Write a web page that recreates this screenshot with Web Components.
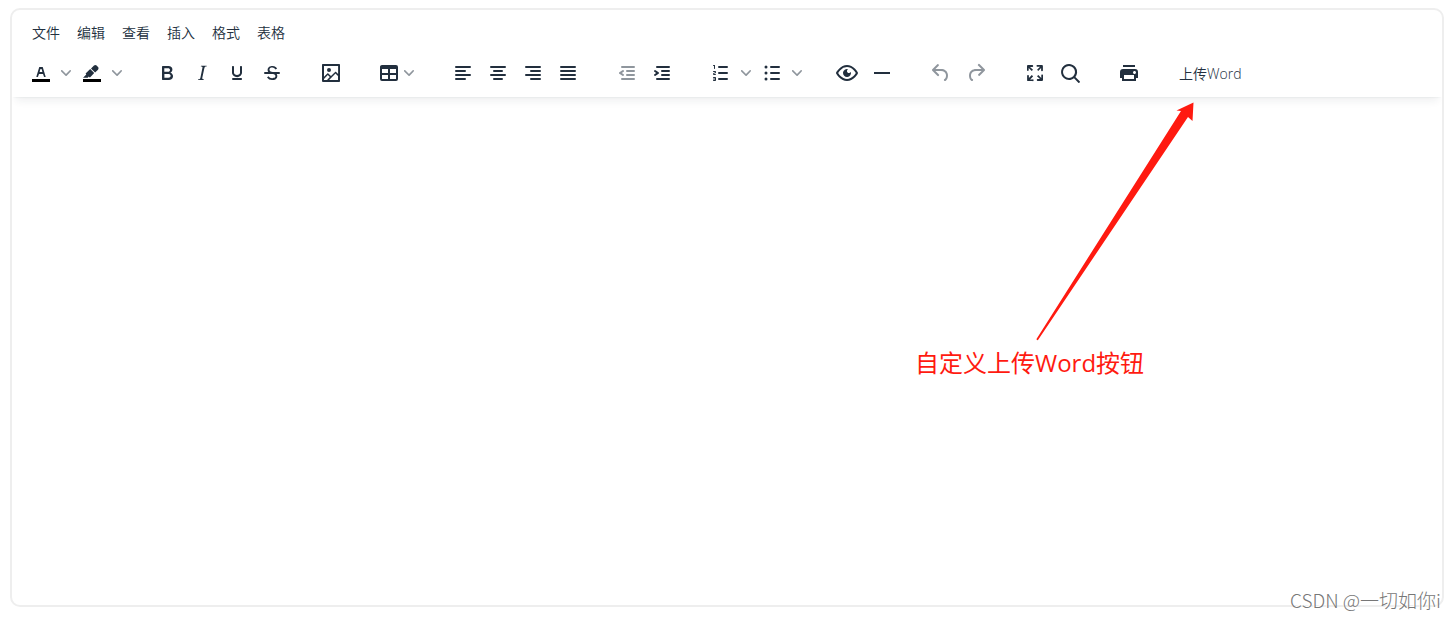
<!DOCTYPE html>
<html lang="zh-CN">
<head>
<meta charset="utf-8">
<meta name="viewport" content="width=device-width, initial-scale=1">
<title>富文本编辑器</title>
<style>
  body {
    box-sizing: border-box;
    display: flex;
    font-family: "Open Sans", "Noto Sans CJK SC", sans-serif;
    margin: 0;
    min-height: 100vh;
    padding: 8px 11px 13px 10px;
    position: relative;
  }
</style>
</head>
<body>
<rich-editor>
  <editor-menubar slot="menubar" items="文件,编辑,查看,插入,格式,表格"></editor-menubar>
  <editor-toolbar slot="toolbar">
    <tool-group>
      <split-button icon="text-color" label="文字颜色"></split-button>
      <split-button icon="highlight" label="背景颜色"></split-button>
    </tool-group>
    <tool-group>
      <tool-button icon="bold" label="粗体"></tool-button>
      <tool-button icon="italic" label="斜体"></tool-button>
      <tool-button icon="underline" label="下划线"></tool-button>
      <tool-button icon="strike" label="删除线"></tool-button>
    </tool-group>
    <tool-group>
      <tool-button icon="image" label="图片"></tool-button>
    </tool-group>
    <tool-group>
      <tool-button icon="table" label="表格" menu></tool-button>
    </tool-group>
    <tool-group>
      <tool-button icon="align-left" label="左对齐"></tool-button>
      <tool-button icon="align-center" label="居中"></tool-button>
      <tool-button icon="align-right" label="右对齐"></tool-button>
      <tool-button icon="align-justify" label="两端对齐"></tool-button>
    </tool-group>
    <tool-group>
      <tool-button icon="outdent" label="减少缩进" disabled></tool-button>
      <tool-button icon="indent" label="增加缩进"></tool-button>
    </tool-group>
    <tool-group>
      <split-button icon="ordered-list" label="有序列表"></split-button>
      <split-button icon="bullet-list" label="无序列表"></split-button>
    </tool-group>
    <tool-group>
      <tool-button icon="preview" label="预览"></tool-button>
      <tool-button icon="rule" label="水平线"></tool-button>
    </tool-group>
    <tool-group>
      <tool-button icon="undo" label="撤销" disabled></tool-button>
      <tool-button icon="redo" label="重做" disabled></tool-button>
    </tool-group>
    <tool-group>
      <tool-button icon="fullscreen" label="全屏"></tool-button>
      <tool-button icon="search" label="查找"></tool-button>
    </tool-group>
    <tool-group>
      <tool-button icon="print" label="打印"></tool-button>
    </tool-group>
    <tool-group>
      <tool-button>上传Word</tool-button>
    </tool-group>
  </editor-toolbar>
</rich-editor>
<arrow-note>自定义上传Word按钮</arrow-note>
<corner-mark>CSDN @一切如你i</corner-mark>

<script>
const bar = (x, y, w) =>
    `M${x + 1} ${y}h${w - 2}a1 1 0 0 1 0 2h-${w - 2}a1 1 0 0 1 0-2z`;

// All icons are drawn on a 24 x 24 grid.
const ICONS = {
    'text-color': '<path fill="#000" d="M3 18h18v3H3z"/><path d="M8.7 16h-.8a.5.5 0 0 1-.5-.6l2.7-9c.1-.3.3-.4.5-.4h2.8c.2 0 .4.1.5.4l2.7 9a.5.5 0 0 1-.5.6h-.8a.5.5 0 0 1-.4-.4l-.7-2.2c0-.3-.3-.4-.5-.4h-3.4c-.2 0-.4.1-.5.4l-.7 2.2c0 .3-.2.4-.4.4zm2.6-7.6-.6 2a.5.5 0 0 0 .5.6h1.6a.5.5 0 0 0 .5-.6l-.6-2c0-.3-.3-.4-.5-.4h-.4c-.2 0-.4.1-.5.4z"/>',
    'highlight': '<path fill="#000" d="M3 18h18v3H3z"/><path d="M7.7 16.7H3l3.3-3.3-.7-.8L10.2 8l4 4.1-4 4.2c-.2.2-.6.2-.8 0l-.6-.7-1.1 1.1zm5-7.5L11 7.4l3-2.9a2 2 0 0 1 2.6 0L18 6c.7.7.7 2 0 2.7l-2.9 2.9-1.8-1.8-.5-.6z"/>',
    'bold': '<path d="M7.8 19c-.3 0-.5 0-.6-.2l-.2-.5V5.7c0-.2 0-.4.2-.5l.6-.2h5c1.5 0 2.7.3 3.5 1 .7.6 1.1 1.4 1.1 2.5a3 3 0 0 1-.6 1.9c-.4.6-1 1-1.6 1.2.4.1.9.3 1.3.6s.8.7 1 1.2c.4.4.5 1 .5 1.6 0 1.3-.4 2.3-1.3 3-.8.7-2.1 1-3.8 1H7.8zm5-8.3c.6 0 1.2-.1 1.6-.5.4-.3.6-.7.6-1.3 0-1.1-.8-1.7-2.3-1.7H9.3v3.5h3.4zm.5 6c.7 0 1.3-.1 1.7-.4.4-.4.6-.9.6-1.5s-.2-1-.7-1.4c-.4-.3-1-.4-2-.4H9.4v3.8h4z"/>',
    'italic': '<path d="m16.7 4.7-.1.9h-.3c-.6 0-1 0-1.4.3-.3.3-.4.6-.5 1.1l-2.1 9.8v.6c0 .5.4.8 1.4.8h.2l-.2.8H8l.2-.8h.2c1.1 0 1.8-.5 2-1.5l2-9.8.1-.5c0-.6-.4-.8-1.4-.8h-.3l.2-.9h5.8z"/>',
    'underline': '<path d="M16 5c.6 0 1 .4 1 1v5.5a4 4 0 0 1-.4 1.8l-1 1.4a5.3 5.3 0 0 1-5.5 1 5 5 0 0 1-1.6-1c-.5-.4-.8-.9-1.1-1.4a4 4 0 0 1-.4-1.8V6c0-.6.4-1 1-1s1 .4 1 1v5.5c0 .3 0 .6.2 1l.6.7a3.3 3.3 0 0 0 2.2.8 3.4 3.4 0 0 0 2.2-.8c.3-.2.4-.5.6-.8l.2-.9V6c0-.6.4-1 1-1zM8 17h8c.6 0 1 .4 1 1s-.4 1-1 1H8a1 1 0 0 1 0-2z"/>',
    'strike': `<path d="M15.6 8.5c-.5-.7-1-1.1-1.3-1.3-.6-.4-1.3-.6-2-.6-2.7 0-2.8 1.7-2.8 2.1 0 1.6 1.8 2 3.2 2.3 4.4.9 4.6 2.8 4.6 3.9 0 1.4-.7 4.1-5 4.1A6.2 6.2 0 0 1 7 16.4l1.5-1.1c.4.6 1.6 2 3.7 2 1.6 0 2.5-.4 3-1.2.4-.8.3-2-.8-2.6-.7-.4-1.6-.7-2.9-1-1-.2-3.9-.8-3.9-3.6C7.6 6 10.3 5 12.4 5c2.9 0 4.2 1.6 4.7 2.4l-1.5 1.1z"/><path d="${bar(4, 11, 16)}"/>`,
    'image': '<path fill-rule="evenodd" d="m5 15.7 3.3-3.2c.3-.3.7-.3 1 0L12 15l4.1-4c.3-.4.8-.4 1 0l2 1.9V5H5v10.7zM5 18v1h3l2.8-2.9-2-2L5 17.9zm14-3-2.5-2.4-6.4 6.5H19v-4zM4 3h16c.6 0 1 .4 1 1v16c0 .6-.4 1-1 1H4a1 1 0 0 1-1-1V4c0-.6.4-1 1-1zm6 8a2 2 0 1 0 0-4 2 2 0 0 0 0 4z"/>',
    'table': '<path fill-rule="evenodd" d="M19 4a2 2 0 0 1 2 2v12a2 2 0 0 1-2 2H5a2 2 0 0 1-2-2V6c0-1.1.9-2 2-2h14zM5 14v4h6v-4H5zm14 0h-6v4h6v-4zm0-6h-6v4h6V8zM5 12h6V8H5v4z"/>',
    'align-left': `<path d="${bar(4, 5, 16)}${bar(4, 9, 11)}${bar(4, 13, 16)}${bar(4, 17, 11)}"/>`,
    'align-center': `<path d="${bar(4, 5, 16)}${bar(7, 9, 10)}${bar(4, 13, 16)}${bar(7, 17, 10)}"/>`,
    'align-right': `<path d="${bar(4, 5, 16)}${bar(9, 9, 11)}${bar(4, 13, 16)}${bar(9, 17, 11)}"/>`,
    'align-justify': `<path d="${bar(4, 5, 16)}${bar(4, 9, 16)}${bar(4, 13, 16)}${bar(4, 17, 16)}"/>`,
    'outdent': `<path d="${bar(6, 5, 14)}${bar(11, 9, 9)}${bar(11, 13, 9)}${bar(6, 17, 14)}M8.6 13.2a1 1 0 0 1-1.2 1.6l-3-2a1 1 0 0 1 0-1.6l3-2a1 1 0 0 1 1.2 1.6L6.8 12z"/>`,
    'indent': `<path d="${bar(6, 5, 14)}${bar(11, 9, 9)}${bar(11, 13, 9)}${bar(6, 17, 14)}M4.4 13.2 6.2 12l-1.8-1.2a1 1 0 0 1 1.2-1.6l3 2a1 1 0 0 1 0 1.6l-3 2a1 1 0 1 1-1.2-1.6z"/>`,
    'ordered-list': `<path d="${bar(9, 5, 10)}${bar(9, 11, 10)}${bar(9, 17, 10)}M6 4v3.5c0 .3-.2.5-.5.5a.5.5 0 0 1-.5-.5V5h-.5a.5.5 0 0 1 0-1H6zm-1 8.8.2.2h1.3c.3 0 .5.2.5.5s-.2.5-.5.5H4.9a1 1 0 0 1-.9-1V13c0-.4.3-.8.6-1l1.2-.4.2-.3a.2.2 0 0 0-.2-.2H4.5a.5.5 0 0 1-.5-.5c0-.3.2-.5.5-.5h1.6c.5 0 .9.4.9 1v.1c0 .4-.3.8-.6 1l-1.2.4-.2.3zM7 17v2c0 .6-.4 1-1 1H4.5a.5.5 0 0 1 0-1h1.2c.2 0 .3-.1.3-.3 0-.2-.1-.3-.3-.3H4.4a.4.4 0 1 1 0-.8h1.3c.2 0 .3-.1.3-.3 0-.2-.1-.3-.3-.3H4.5a.5.5 0 1 1 0-1H6c.6 0 1 .4 1 1z"/>`,
    'bullet-list': `<path d="${bar(10, 5, 10)}${bar(10, 11, 10)}${bar(10, 17, 10)}"/><circle cx="6" cy="6" r="1.5"/><circle cx="6" cy="12" r="1.5"/><circle cx="6" cy="18" r="1.5"/>`,
    'preview': '<path fill-rule="evenodd" d="M3.5 12.5c.5.8 1.1 1.6 1.8 2.3 2 2 4.2 3.2 6.7 3.2s4.7-1.2 6.7-3.2a16.2 16.2 0 0 0 2.1-2.8 15.7 15.7 0 0 0-2.1-2.8c-2-2-4.2-3.2-6.7-3.2a9.3 9.3 0 0 0-6.7 3.2A16.2 16.2 0 0 0 3.2 12c0 .2.2.3.3.5zm-2.4-1 .7-1.2L4 7.8C6.2 5.4 8.9 4 12 4c3 0 5.8 1.4 8.1 3.8a18.2 18.2 0 0 1 2.8 3.7v1l-.7 1.2a18.1 18.1 0 0 1-2.1 2.5c-2.3 2.4-5 3.8-8.1 3.8-3 0-5.8-1.4-8.1-3.8a18.2 18.2 0 0 1-2.8-3.7 1 1 0 0 1 0-1zm12-3.3a2 2 0 1 0 2.7 2.6 4 4 0 1 1-2.6-2.6z"/>',
    'rule': '<path d="M4 11h16v2H4z"/>',
    'undo': '<path d="M6.4 8H12c3.7 0 6.2 2 6.8 5.1.6 2.7-.4 5.6-2.3 6.8a1 1 0 0 1-1-1.8c1.1-.6 1.8-2.7 1.4-4.6-.5-2.1-2.1-3.5-4.9-3.5H6.4l3.3 3.3a1 1 0 1 1-1.4 1.4l-5-5a1 1 0 0 1 0-1.4l5-5a1 1 0 0 1 1.4 1.4L6.4 8z"/>',
    'redo': '<path d="M17.6 10H12c-2.8 0-4.4 1.4-4.9 3.5-.4 2 .3 4 1.4 4.6a1 1 0 1 1-1 1.8c-2-1.2-2.9-4.1-2.3-6.8.6-3 3-5.1 6.8-5.1h5.6l-3.3-3.3a1 1 0 1 1 1.4-1.4l5 5a1 1 0 0 1 0 1.4l-5 5a1 1 0 0 1-1.4-1.4l3.3-3.3z"/>',
    'fullscreen': '<path d="m15.3 10-1.2-1.3 2.9-3h-2.3a.9.9 0 1 1 0-1.7H19c.5 0 .9.4.9.9v4.4a.9.9 0 1 1-1.8 0V7l-2.9 3zm0 4 3 3v-2.3a.9.9 0 1 1 1.7 0V19c0 .5-.4.9-.9.9h-4.4a.9.9 0 1 1 0-1.8H17l-3-2.9 1.3-1.2zM10 15.4l-2.9 3h2.3a.9.9 0 1 1 0 1.7H5a.9.9 0 0 1-.9-.9v-4.4a.9.9 0 1 1 1.8 0V17l2.9-3 1.2 1.3zM8.7 10 5.7 7v2.3a.9.9 0 0 1-1.7 0V5c0-.5.4-.9.9-.9h4.4a.9.9 0 0 1 0 1.8H7l3 2.9L8.7 10z"/>',
    'search': '<path fill-rule="evenodd" d="M16 17.3a8 8 0 1 1 1.4-1.4l4.3 4.4a1 1 0 0 1-1.4 1.4L16 17.3zm-5-.3a6 6 0 1 0 0-12 6 6 0 0 0 0 12z"/>',
    'print': '<path fill-rule="evenodd" d="M18 8H6a3 3 0 0 0-3 3v6h2v3h14v-3h2v-6a3 3 0 0 0-3-3zm-1 10H7v-4h10v4zm.5-5c-.8 0-1.5-.7-1.5-1.5s.7-1.5 1.5-1.5 1.5.7 1.5 1.5-.7 1.5-1.5 1.5zM18 4H6v2h12V4z"/>'
};

const icon = (name) =>
    `<svg width="24" height="24" viewBox="0 0 24 24" aria-hidden="true">${ICONS[name]}</svg>`;

const CHEVRON =
    '<svg class="chevron" width="10" height="10" viewBox="0 0 10 10" aria-hidden="true"><path d="M8.7 2.2c.3-.3.8-.3 1 0 .4.4.4.9 0 1.2L5.7 7.8c-.3.3-.9.3-1.2 0L.2 3.4a.8.8 0 0 1 0-1.2c.3-.3.8-.3 1.1 0L5 6l3.7-3.8z"/></svg>';

// Shared by every element that holds buttons
const BUTTON_STYLE = `
    button {
      align-items: center;
      background: none;
      border: 0;
      border-radius: 3px;
      color: #222f3e;
      display: flex;
      font: inherit;
      font-size: 14px;
      font-weight: 350;
      height: 28px;
      justify-content: center;
      padding: 0;
      white-space: nowrap;
    }
    button:hover:enabled {
      background: #cce2fa;
    }
    svg {
      display: block;
      fill: #222f3e;
    }
    .chevron {
      margin: 0 3px;
      opacity: 0.5;
    }`;

customElements.define('rich-editor', class extends HTMLElement {
    constructor() {
        super();
        this.attachShadow({mode: 'open'}).innerHTML =
        `<style>
        :host {
          border: 2px solid #eee;
          border-radius: 10px;
          box-sizing: border-box;
          display: flex;
          flex: 1;
          flex-direction: column;
          overflow: hidden;
        }
        header {
          box-shadow: 0 2px 2px -2px rgba(34,47,62,0.1), 0 8px 8px -4px rgba(34,47,62,0.07);
          padding: 4px 0 5px;
        }
        textarea {
          background: none;
          border: 0;
          color: #222f3e;
          flex: 1;
          font: inherit;
          font-size: 14px;
          outline: none;
          padding: 16px;
          resize: none;
        }
        </style>
        <header>
          <slot name="menubar"></slot>
          <slot name="toolbar"></slot>
        </header>
        <textarea aria-label="编辑区"></textarea>`;
    }
});

customElements.define('editor-menubar', class extends HTMLElement {
    constructor() {
        super();
        const items = this.getAttribute('items').split(',');
        this.attachShadow({mode: 'open'}).innerHTML =
        `<style>
        :host {
          display: flex;
          gap: 1px;
          padding: 4px 12px 7px;
        }
        ${BUTTON_STYLE}
        button {
          padding: 0 8px;
        }
        </style>
        ${items.map((item) => `<button type="button">${item}</button>`).join('')}`;
    }
});

customElements.define('editor-toolbar', class extends HTMLElement {
    constructor() {
        super();
        this.setAttribute('role', 'toolbar');
        this.attachShadow({mode: 'open'}).innerHTML =
        `<style>
        :host {
          column-gap: 25px;
          display: flex;
          flex-wrap: wrap;
          padding: 6px 12px 5px;
          row-gap: 11px;
        }
        </style>
        <slot></slot>`;
    }
});

customElements.define('tool-group', class extends HTMLElement {
    constructor() {
        super();
        this.attachShadow({mode: 'open'}).innerHTML =
        `<style>
        :host {
          display: flex;
          gap: 1px;
        }
        </style>
        <slot></slot>`;
    }
});

// A button with an icon, or with slotted text when there is no icon.
customElements.define('tool-button', class extends HTMLElement {
    constructor() {
        super();
        const name = this.getAttribute('icon');
        const label = name ? `aria-label="${this.getAttribute('label')}"` : '';
        const disabled = this.hasAttribute('disabled') ? 'disabled' : '';
        this.attachShadow({mode: 'open'}).innerHTML =
        `<style>
        :host {
          display: block;
        }
        ${BUTTON_STYLE}
        button {
          padding: 0 ${name ? (this.hasAttribute('menu') ? 4 : 5) : 8}px;
        }
        button:disabled {
          opacity: 0.5;
        }
        </style>
        <button type="button" ${label} ${disabled}>
          ${name ? icon(name) : '<slot></slot>'}${this.hasAttribute('menu') ? CHEVRON : ''}
        </button>`;
    }
});

customElements.define('split-button', class extends HTMLElement {
    constructor() {
        super();
        const label = this.getAttribute('label');
        this.attachShadow({mode: 'open'}).innerHTML =
        `<style>
        :host {
          display: flex;
        }
        ${BUTTON_STYLE}
        .main {
          padding: 0 5px;
        }
        </style>
        <button type="button" class="main" aria-label="${label}">${icon(this.getAttribute('icon'))}</button>
        <button type="button" aria-label="${label}选项">${CHEVRON}</button>`;
    }
});

// Red note lying over the editing area, its arrow points at the upload button.
customElements.define('arrow-note', class extends HTMLElement {
    constructor() {
        super();
        this.attachShadow({mode: 'open'}).innerHTML =
        `<style>
        :host {
          color: #ff1a10;
          font-size: 24px;
          left: 915px;
          line-height: 32px;
          pointer-events: none;
          position: absolute;
          top: 102px;
          white-space: nowrap;
        }
        svg {
          display: block;
          fill: #ff1a10;
          margin-bottom: 5px;
        }
        </style>
        <svg width="280" height="240" viewBox="0 0 280 240" aria-hidden="true">
          <path d="M278.500.500 261.500 8.500l4.500.5L121.500 237q0 1.500 1.500 1L273 15l4.500 4z"/>
        </svg>
        <slot></slot>`;
    }
});

customElements.define('corner-mark', class extends HTMLElement {
    constructor() {
        super();
        this.attachShadow({mode: 'open'}).innerHTML =
        `<style>
        :host {
          bottom: 8px;
          color: #777;
          font-family: "Noto Sans CJK SC", sans-serif;
          font-size: 19px;
          font-weight: 300;
          line-height: 24px;
          pointer-events: none;
          position: absolute;
          right: 14px;
          text-shadow: -1px -1px 0 #fff;
          white-space: nowrap;
        }
        </style>
        <slot></slot>`;
    }
});
</script>
</body>
</html>
